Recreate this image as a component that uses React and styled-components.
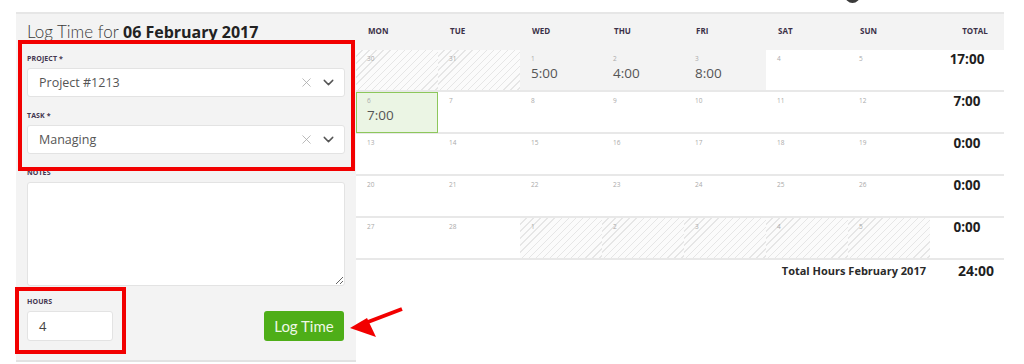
import React from 'react';
import styled, { createGlobalStyle } from 'styled-components';
import { X, ChevronDown } from 'lucide-react';

const GlobalStyle = createGlobalStyle`
    html, body {
        margin:0;
        padding:0;
        background:#fff;
    }
    body {
        font-family:"Open Sans", "Liberation Sans", sans-serif;
        color:#333;
    }
`;

const Screen = styled.div`
    position:relative;
    width:1024px;
    height:364px;
    overflow:hidden;
    background:#fff;
`;

const Layout = styled.div`
    display:flex;
    align-items:flex-start;
    padding-top:12px;
    padding-left:16px;
`;

/* ---------- form panel ---------- */

const FormPanel = styled.div`
    box-sizing:border-box;
    width:340px;
    height:350px;
    background:#f3f3f3;
    border-top:2px solid #e6e6e6;
    border-bottom:2px solid #e2e2e2;
    padding:6px 11px 0 11px;
    display:flex;
    flex-direction:column;
`;

const Title = styled.div`
    font-family:Lato, "Open Sans", sans-serif;
    font-size:17px;
    font-weight:300;
    color:#3a3a3a;
    line-height:24px;
    margin-bottom:10px;
    white-space:nowrap;
`;

const TitleDate = styled.span`
    font-family:"Open Sans", sans-serif;
    font-weight:700;
    font-size:16px;
    color:#222;
`;

const Field = styled.div`
    display:flex;
    flex-direction:column;
    margin-bottom:${p => p.$gap ?? 14}px;
`;

const Label = styled.div`
    font-size:7px;
    font-weight:700;
    color:#43364f;
    letter-spacing:0.1px;
    line-height:10px;
    margin-bottom:4px;
`;

const SelectBox = styled.div`
    box-sizing:border-box;
    height:29px;
    background:#fff;
    border:1px solid #e3e3e3;
    border-radius:3px;
    display:flex;
    align-items:center;
    padding-left:11px;
    padding-right:7px;
`;

const SelectValue = styled.div`
    flex:1;
    font-size:12.5px;
    color:#555;
`;

const SelectIcons = styled.div`
    display:flex;
    align-items:center;
    gap:6px;
    color:#aaa;
    svg:last-child { color:#555; }
`;

const NotesArea = styled.textarea`
    display:block;
    box-sizing:border-box;
    width:318px;
    height:104px;
    margin:0;
    background:#fff;
    border:1px solid #e3e3e3;
    border-radius:3px;
    resize:both;
    outline:none;
`;

const BottomRow = styled.div`
    display:flex;
    justify-content:space-between;
    align-items:flex-end;
    margin-top:11px;
`;

const HoursInput = styled.div`
    box-sizing:border-box;
    width:86px;
    height:30px;
    background:#fff;
    border:1px solid #e3e3e3;
    border-radius:3px;
    padding-left:11px;
    display:flex;
    align-items:center;
    font-size:13px;
    color:#444;
`;

const LogButton = styled.button`
    box-sizing:border-box;
    width:80px;
    height:30px;
    border:none;
    border-radius:3px;
    background:#4eae18;
    color:#eef8e6;
    font-family:Lato, "Open Sans", sans-serif;
    font-size:15px;
    margin-right:1px;
    cursor:pointer;
`;

/* ---------- calendar ---------- */

const Calendar = styled.div`
    width:648px;
    display:flex;
    flex-direction:column;
`;

const HeaderRow = styled.div`
    box-sizing:border-box;
    display:grid;
    grid-template-columns:repeat(7, 82px) 1fr;
    height:38px;
    background:#f3f3f3;
    border-top:2px solid #e6e6e6;
`;

const HeadCell = styled.div`
    display:flex;
    align-items:center;
    justify-content:${p => p.$total ? 'center' : 'flex-start'};
    padding-left:${p => p.$total ? 16 : 12}px;
    padding-bottom:3px;
    font-size:8px;
    font-weight:700;
    color:#3b3148;
`;

const WeekRow = styled.div`
    box-sizing:border-box;
    display:grid;
    grid-template-columns:repeat(7, 82px) 1fr;
    height:42px;
    border-bottom:2px solid #e8e8e8;
`;

const cellBackground = {
    hatched: `repeating-linear-gradient(135deg, #fbfbfb 0px, #fbfbfb 4px, #e6e6e6 4px, #e6e6e6 5px)`,
    filled: '#f3f3f3',
    selected: '#ebf5e4',
    plain: '#fff',
};

const DayCell = styled.div`
    box-sizing:border-box;
    padding:5px 11px 0 11px;
    background:${p => cellBackground[p.$variant || 'plain']};
    border:${p => p.$variant === 'selected' ? '1.5px solid #8dc75b' : 'none'};
    ${p => p.$variant === 'selected' && 'padding:4px 10px 0 10px; margin-bottom:-1px;'}
`;

const DayNum = styled.div`
    font-size:6.5px;
    color:#aaa;
    line-height:8px;
`;

const Hours = styled.div`
    font-size:13.5px;
    color:#555;
    line-height:18px;
    margin-top:1px;
`;

const TotalCell = styled.div`
    text-align:center;
    font-size:13.5px;
    font-weight:700;
    color:#1f1f1f;
`;

const SummaryRow = styled.div`
    display:flex;
    justify-content:flex-end;
    align-items:center;
    height:20px;
`;

const SummaryLabel = styled.div`
    font-size:11px;
    font-weight:700;
    color:#2a2a2a;
    margin-right:4px;
`;

const SummaryValue = styled.div`
    box-sizing:border-box;
    width:74px;
    padding-left:18px;
    text-align:center;
    font-size:14px;
    font-weight:700;
    color:#1f1f1f;
`;

/* ---------- annotation overlays ---------- */

const Highlight = styled.div`
    position:absolute;
    box-sizing:border-box;
    left:${p => p.$x}px;
    top:${p => p.$y}px;
    width:${p => p.$w}px;
    height:${p => p.$h}px;
    border:4px solid #f20000;
    pointer-events:none;
`;

const ArrowMark = styled.svg`
    position:absolute;
    left:346px;
    top:302px;
`;

const TopBlob = styled.div`
    position:absolute;
    left:845px;
    top:-12px;
    width:15px;
    height:15px;
    border-radius:50%;
    background:#3a3a3a;
`;

const weeks = [
    {
        days: [
            { n: 30, v: 'hatched' }, { n: 31, v: 'hatched' },
            { n: 1, v: 'filled', h: '5:00' }, { n: 2, v: 'filled', h: '4:00' },
            { n: 3, v: 'filled', h: '8:00' }, { n: 4 }, { n: 5 },
        ],
        total: '17:00',
    },
    {
        days: [{ n: 6, v: 'selected', h: '7:00' }, { n: 7 }, { n: 8 }, { n: 9 }, { n: 10 }, { n: 11 }, { n: 12 }],
        total: '7:00',
    },
    {
        days: [{ n: 13 }, { n: 14 }, { n: 15 }, { n: 16 }, { n: 17 }, { n: 18 }, { n: 19 }],
        total: '0:00',
    },
    {
        days: [{ n: 20 }, { n: 21 }, { n: 22 }, { n: 23 }, { n: 24 }, { n: 25 }, { n: 26 }],
        total: '0:00',
    },
    {
        days: [
            { n: 27 }, { n: 28 },
            { n: 1, v: 'hatched' }, { n: 2, v: 'hatched' }, { n: 3, v: 'hatched' },
            { n: 4, v: 'hatched' }, { n: 5, v: 'hatched' },
        ],
        total: '0:00',
    },
];

const dayNames = ['MON', 'TUE', 'WED', 'THU', 'FRI', 'SAT', 'SUN'];

function Select({ value }) {
    return (
        <SelectBox>
            <SelectValue>{value}</SelectValue>
            <SelectIcons>
                <X size={15} strokeWidth={1.3} />
                <ChevronDown size={17} strokeWidth={2} />
            </SelectIcons>
        </SelectBox>
    );
}

function App() {
    return (
        <Screen>
            <GlobalStyle />
            <TopBlob />
            <Layout>
                <FormPanel>
                    <Title>Log Time for <TitleDate>06 February 2017</TitleDate></Title>
                    <Field>
                        <Label>PROJECT *</Label>
                        <Select value="Project #1213" />
                    </Field>
                    <Field>
                        <Label>TASK *</Label>
                        <Select value="Managing" />
                    </Field>
                    <Field $gap={0}>
                        <Label>NOTES</Label>
                        <NotesArea />
                    </Field>
                    <BottomRow>
                        <Field $gap={0}>
                            <Label>HOURS</Label>
                            <HoursInput>4</HoursInput>
                        </Field>
                        <LogButton>Log Time</LogButton>
                    </BottomRow>
                </FormPanel>

                <Calendar>
                    <HeaderRow>
                        {dayNames.map(d => <HeadCell key={d}>{d}</HeadCell>)}
                        <HeadCell $total>TOTAL</HeadCell>
                    </HeaderRow>
                    {weeks.map((w, i) => (
                        <WeekRow key={i}>
                            {w.days.map((d, j) => (
                                <DayCell key={j} $variant={d.v}>
                                    <DayNum>{d.n}</DayNum>
                                    {d.h && <Hours>{d.h}</Hours>}
                                </DayCell>
                            ))}
                            <TotalCell>{w.total}</TotalCell>
                        </WeekRow>
                    ))}
                    <SummaryRow>
                        <SummaryLabel>Total Hours February 2017</SummaryLabel>
                        <SummaryValue>24:00</SummaryValue>
                    </SummaryRow>
                </Calendar>
            </Layout>

            <Highlight $x={18} $y={40} $w={337} $h={131} />
            <Highlight $x={15} $y={287} $w={111} $h={67} />
            <ArrowMark width="60" height="40" viewBox="0 0 60 40">
                <line x1="56" y1="7" x2="14" y2="23" stroke="#f20000" strokeWidth="4" />
                <polygon points="4,26 21,16 30,35" fill="#f20000" />
            </ArrowMark>
        </Screen>
    );
}

export default App;
